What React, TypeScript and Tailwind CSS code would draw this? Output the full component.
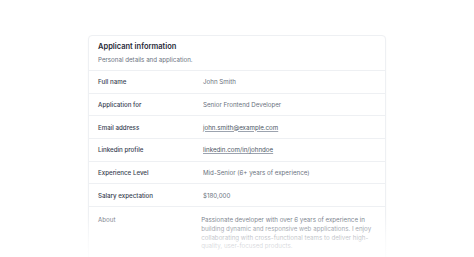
const rows: { label: string; value: string; link?: boolean }[] = [
  { label: 'Full name', value: 'John Smith' },
  { label: 'Application for', value: 'Senior Frontend Developer' },
  { label: 'Email address', value: 'john.smith@example.com', link: true },
  { label: 'Linkedin profile', value: 'linkedin.com/in/johndoe', link: true },
  { label: 'Experience Level', value: 'Mid-Senior (6+ years of experience)' },
  { label: 'Salary expectation', value: '$180,000' },
];

export default function App() {
  return (
    <div className="h-[257px] w-[474px] overflow-hidden bg-white font-['Inter',sans-serif]">
      <div className="relative mx-auto mt-[35px] w-[298px]">
        <div className="rounded-[4px] border border-[#eef0f3] bg-white shadow-[0_1px_2px_rgba(0,0,0,0.03)]">
          {/* header */}
          <div className="border-b border-[#eef0f3] px-[9px] pb-[6px] pt-[6px]">
            <h2 className="text-[7.5px] font-semibold leading-[10px] text-[#1f2937]">Applicant information</h2>
            <p className="mt-[3px] text-[6.2px] leading-[9px] text-[#6b7280]">Personal details and application.</p>
          </div>

          {rows.map((r) => (
            <div key={r.label} className="flex h-[22.7px] items-center border-b border-[#eef0f3] px-[9px] text-[6.2px]">
              <div className="w-[105px] font-medium text-[#374151]">{r.label}</div>
              <div className={r.link ? 'text-[#4b5563] underline decoration-[#9ca3af] underline-offset-[1px]' : 'text-[#6b7280]'}>
                {r.value}
              </div>
            </div>
          ))}

          <div className="flex px-[9px] pb-[16px] pt-[9px] text-[6.2px] leading-[8.7px]">
            <div className="w-[105px] text-[#6b7280]">About</div>
            <p className="w-[178px] text-[#6b7280]">
              Passionate developer with over 6 years of experience in building dynamic and responsive web applications. I enjoy collaborating with cross-functional teams to deliver high-quality, user-focused products.
            </p>
          </div>
        </div>

        {/* fade out */}
        <div className="pointer-events-none absolute inset-x-[-2px] bottom-[-2px] h-[56px] bg-gradient-to-b from-white/0 via-white/70 to-white" />
      </div>
    </div>
  );
}
